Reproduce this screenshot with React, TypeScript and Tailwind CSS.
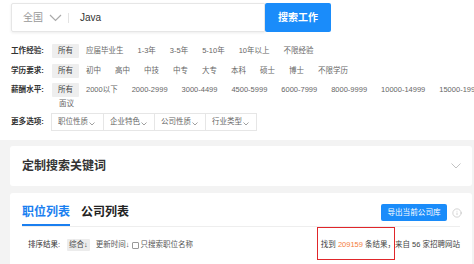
import React from 'react';
import { Info } from 'lucide-react';

const experience = ['应届毕业生', '1-3年', '3-5年', '5-10年', '10年以上', '不限经验'];
const education = ['初中', '高中', '中技', '中专', '大专', '本科', '硕士', '博士', '不限学历'];
const salary = ['2000以下', '2000-2999', '3000-4499', '4500-5999', '6000-7999', '8000-9999', '10000-14999', '15000-19999', '|', '面议'];
const more = ['职位性质', '企业特色', '公司性质', '行业类型'];

function SmallChevron() {
  return (
    <svg width="6" height="4" viewBox="0 0 6 4" className="ml-[1px] mt-[3px]">
      <polyline points="0.5,0.5 3,3 5.5,0.5" fill="none" stroke="#888" strokeWidth="0.8" />
    </svg>
  );
}

// '|' in the list marks where the row wraps in the original page
function FilterRow({ label, options, className = '' }: { label: string; options: string[]; className?: string }) {
  return (
    <div className={`flex items-start ${className}`}>
      <div className="w-[41px] shrink-0 h-[14px] leading-[14px] text-[7.6px] font-bold text-[#333]">{label}</div>
      <div className="flex flex-wrap shrink-0 w-[600px]">
        <span className="h-[14px] leading-[14px] px-[6px] bg-[#eeeeee] rounded-[1px] text-[7.5px] text-[#444]">所有</span>
        {options.map((o) =>
          o === '|' ? (
            <div key={o} className="basis-full h-0" />
          ) : (
            <span key={o} className="h-[14px] leading-[14px] px-[7px] text-[7.5px] text-[#666] whitespace-nowrap">
              {o}
            </span>
          )
        )}
      </div>
    </div>
  );
}

export default function App() {
  return (
    <div className="w-[474px] h-[264px] overflow-hidden bg-[#f3f3f3] font-['Liberation_Sans','Noto_Sans_CJK_SC',sans-serif]">
      <div className="bg-white pl-[11px] pt-[3px] pb-[9px] overflow-hidden">
        {/* search bar */}
        <div className="flex h-[29px]">
          <div className="w-[254px] flex items-center border border-[#e6e6e6] rounded-l-[2px] shadow-[0_1px_3px_rgba(0,0,0,0.08)]">
            <span className="ml-[11px] text-[10px] text-[#999]">全国</span>
            <svg width="13" height="8" viewBox="0 0 13 8" className="ml-[6px]">
              <polyline points="1,1 6.5,6.5 12,1" fill="none" stroke="#aaa" strokeWidth="1.2" />
            </svg>
            <div className="ml-[6px] w-px h-[10px] bg-[#e3e3e3]" />
            <span className="ml-[11px] text-[10px] text-[#333]">Java</span>
          </div>
          <button className="w-[66px] h-[29px] bg-[#1a8cfa] rounded-[2px] text-white text-[10px] font-bold">搜索工作</button>
        </div>

        <FilterRow label="工作经验:" options={experience} className="mt-[12px]" />
        <FilterRow label="学历要求:" options={education} className="mt-[6px]" />
        <FilterRow label="薪酬水平:" options={salary} className="mt-[5px]" />

        <div className="flex items-center mt-[2px]">
          <div className="w-[40px] shrink-0 text-[7.6px] font-bold text-[#333]">更多选项:</div>
          <div className="flex border border-[#e6e6e6]">
            {more.map((m, i) => (
              <div
                key={m}
                className={`w-[51px] h-[16px] flex items-center pl-[6px] text-[7.5px] text-[#666] ${i > 0 ? 'border-l border-[#e6e6e6]' : ''}`}
              >
                {m}
                <SmallChevron />
              </div>
            ))}
          </div>
        </div>
      </div>

      {/* keyword card */}
      <div className="mt-[6px] ml-[10px] w-[462px] h-[40px] bg-white rounded-[3px] flex items-center justify-between pl-[12px] pr-[11px]">
        <span className="text-[12px] font-bold text-[#333]">定制搜索关键词</span>
        <svg width="10" height="6" viewBox="0 0 10 6">
          <polyline points="0.5,0.5 5,5 9.5,0.5" fill="none" stroke="#bbb" strokeWidth="0.9" />
        </svg>
      </div>

      {/* list card */}
      <div className="mt-[7px] ml-[10px] w-[462px] h-[90px] bg-white rounded-[3px] px-[12px]">
        <div className="flex justify-between h-[34px] border-b border-[#eeeeee]">
          <div className="flex items-end gap-[11px]">
            <span className="pb-[4px] border-b-2 border-[#1a7ff0] text-[12px] leading-[16px] font-bold text-[#1a7ff0]">职位列表</span>
            <span className="pb-[6px] text-[12px] leading-[16px] font-bold text-[#222]">公司列表</span>
          </div>
          <div className="flex items-center mt-[11px] h-[17px] gap-[5px] mr-[-2px]">
            <button className="h-[17px] w-[66px] bg-[#1a8cfa] rounded-[2px] text-white text-[7.6px]">导出当前公司库</button>
            <Info size={10} strokeWidth={1.4} color="#b5b5b5" />
          </div>
        </div>

        <div className="relative flex items-center justify-between mt-[12px] h-[12px] pl-[6px]">
          <div className="flex items-center text-[7.5px] text-[#555]">
            <span className="text-[#333]">排序结果:</span>
            <span className="ml-[7px] h-[12px] leading-[12px] px-[2px] bg-[#ececec] rounded-[1px] text-[#444]">综合↓</span>
            <span className="ml-[6px]">更新时间↓</span>
            <span className="ml-[2px] w-[7px] h-[7px] border border-[#999] rounded-[1px]" />
            <span className="ml-[2px]">只搜索职位名称</span>
          </div>
          <div className="text-[7.5px] text-[#444]">
            找到 <span className="text-[#f47c3c]">209159</span> 条结果，来自 56 家招聘网站
          </div>
          <div className="absolute left-[295px] top-[-12px] w-[78px] h-[33px] border-[1.5px] border-[#e0262a]" />
        </div>
      </div>
    </div>
  );
}
